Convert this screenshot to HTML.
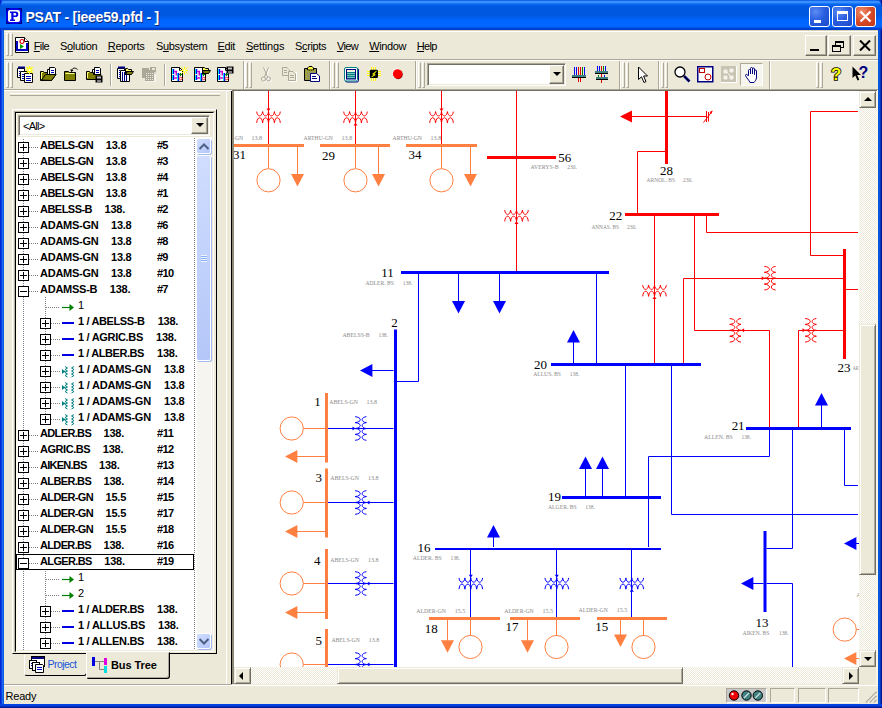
<!DOCTYPE html>
<html>
<head>
<meta charset="utf-8">
<title>PSAT - [ieee59.pfd - ]</title>
<style>
html,body{margin:0;padding:0;}
body{width:882px;height:708px;position:relative;overflow:hidden;background:#ece9d8;font-family:"Liberation Sans",sans-serif;font-size:11px;color:#000;}
.abs{position:absolute;}
#frame{position:absolute;left:0;top:0;width:882px;height:708px;background:linear-gradient(90deg,#0019cf 0,#0831d9 1px,#166aee 2.5px,#0855dd 4px,#0855dd 878px,#0855dd 880px,#001a9c 881px,#00138c 882px);}
#frameb{position:absolute;left:0;top:704px;width:882px;height:4px;background:linear-gradient(#0540e0 0,#0540e0 2px,#001ea0 3px,#00138c 4px);}
#title{position:absolute;left:0;top:0;width:882px;height:30px;border-radius:7px 7px 0 0;
 background:linear-gradient(#0050e0 0,#3a90ff 1.5px,#3a90ff 2.5px,#0a6af5 4px,#0058e0 6.5px,#0058e0 15px,#0066ff 21px,#0066ff 27px,#0040d0 28.5px,#0040d0 30px);}
#title .t{position:absolute;left:25.5px;top:9px;font-weight:bold;font-size:14px;color:#fff;text-shadow:1px 1px 0 #0a2a80;white-space:nowrap;}
#client{position:absolute;left:4px;top:30px;width:874px;height:674px;background:#ece9d8;}
.tb{position:absolute;width:21px;height:21px;border-radius:3px;border:1px solid #fff;box-sizing:border-box;}
.tbb{background:radial-gradient(circle at 30% 25%,#5c8cf5 0%,#2a5fe0 45%,#1a48c8 100%);}
.tbr{background:radial-gradient(circle at 30% 25%,#f09070 0%,#d84a28 50%,#c03818 100%);}
.menu{position:absolute;top:40px;font-size:11px;white-space:nowrap;}
.menu u{text-decoration:underline;}
.mdib{position:absolute;top:35px;height:21px;box-sizing:border-box;background:#ece9d8;border:1px solid;border-color:#fff #716f64 #716f64 #fff;box-shadow:inset -1px -1px 0 #aca899;}
.grip{position:absolute;width:3px;border:1px solid;border-color:#fff #aca899 #aca899 #fff;box-sizing:border-box;}
.hl{position:absolute;height:2px;border-top:1px solid #aca899;border-bottom:1px solid #fff;box-sizing:border-box;}
.tree{position:absolute;margin-top:-2px;font-weight:bold;font-size:11px;white-space:pre;line-height:16px;height:16px;}
.pm{position:absolute;width:11px;height:11px;border:1px solid #000;box-sizing:border-box;background:#fff;}
.pm:before{content:"";position:absolute;left:1px;top:4px;width:7px;height:1px;background:#000;}
.pm.p:after{content:"";position:absolute;left:4px;top:1px;width:1px;height:7px;background:#000;}
.dh{position:absolute;height:1px;background-image:linear-gradient(90deg,#808080 50%,transparent 50%);background-size:2px 1px;}
.dv{position:absolute;width:1px;background-image:linear-gradient(#808080 50%,transparent 50%);background-size:1px 2px;}
.sbb{width:15px;height:16px;box-sizing:border-box;border:1px solid #fff;border-radius:2.5px;background:linear-gradient(135deg,#d2defe,#c1d2fc 50%,#b4c6f8);box-shadow:1px 1px 0 #a3baf0}
.trk{background-color:#f5f4ea;background-image:linear-gradient(45deg,#fff 25%,transparent 25%,transparent 75%,#fff 75%),linear-gradient(45deg,#fff 25%,transparent 25%,transparent 75%,#fff 75%);background-size:2px 2px;background-position:0 0,1px 1px;background-color:#ece9d8}
.cb{box-sizing:border-box;background:#ece9d8;border:1px solid;border-color:#ece9d8 #716f64 #716f64 #ece9d8;box-shadow:inset 1px 1px 0 #fff,inset -1px -1px 0 #aca899}
.sp{box-sizing:border-box;border:1px solid;border-color:#aca899 #fff #fff #aca899}
</style>
</head>
<body>
<div id="frame"></div><div id="frameb"></div>
<div id="title"><div class="t" style="letter-spacing:-0.25px;">PSAT - [ieee59.pfd - ]</div></div>
<div id="client"></div>
<!-- title icon -->
<svg class="abs" style="left:6px;top:8px" width="16" height="16" viewBox="0 0 16 16"><rect x="0" y="0" width="16" height="16" fill="#0000e8"/><path d="M0 0H4V1H1V4H0ZM16 0H12V1H15V4H16ZM0 16H4V15H1V12H0ZM16 16H12V15H15V12H16Z" fill="#000080"/><rect x="2" y="2" width="12" height="12" rx="2" fill="#fff"/><path d="M4 3.500h5.500a2.800 2.800 0 0 1 0 5.600H7.500V11.500H9V13H4V11.500H5.300V5H4Z M7.500 5V7.600H9a1.300 1.300 0 0 0 0-2.600Z" fill="#0000e0"/></svg>
<!-- title buttons -->
<div class="tb tbb" style="left:809px;top:6px"><div class="abs" style="left:4px;top:13px;width:7px;height:3px;background:#fff"></div></div>
<div class="tb tbb" style="left:832px;top:6px"><div class="abs" style="left:4px;top:4px;width:11px;height:10px;border:1px solid #fff;border-top-width:3px;box-sizing:border-box"></div></div>
<div class="tb tbr" style="left:855px;top:6px"><svg class="abs" style="left:3px;top:3px" width="13" height="13" viewBox="0 0 13 13"><path d="M1.5 1.5L11.5 11.5M11.5 1.5L1.5 11.5" stroke="#fff" stroke-width="2.2"/></svg></div>
<!-- menu bar -->
<div class="abs" style="left:4px;top:30px;width:874px;height:1px;background:#d6d0b4"></div><div class="abs" style="left:4px;top:31px;width:874px;height:1px;background:#fff"></div>
<div class="grip" style="left:6px;top:33px;height:23px"></div><div class="grip" style="left:10px;top:33px;height:23px"></div>
<svg class="abs" style="left:14px;top:37px" width="16" height="16" viewBox="0 0 16 16"><path d="M1.5 0.5H10.5L14.5 4.5V15.5H1.5Z" fill="#fff" stroke="#000"/><path d="M10.5 0.5V4.5H14.5" fill="#fff" stroke="#000"/><path d="M3 4V13H13V6" fill="none" stroke="#0000c0" stroke-width="2"/><circle cx="8" cy="4.5" r="2" fill="none" stroke="#e00000" stroke-width="1.2"/><path d="M6 7V12L10 9.5Z" fill="#00a000"/></svg>
<div class="menu" style="letter-spacing:-0.61px;left:33.7px"><u>F</u>ile</div>
<div class="menu" style="letter-spacing:-0.30px;left:59.9px">S<u>o</u>lution</div>
<div class="menu" style="letter-spacing:-0.23px;left:107.7px"><u>R</u>eports</div>
<div class="menu" style="letter-spacing:-0.32px;left:155.9px">S<u>u</u>bsystem</div>
<div class="menu" style="letter-spacing:-0.42px;left:217.6px"><u>E</u>dit</div>
<div class="menu" style="letter-spacing:-0.18px;left:245.9px"><u>S</u>ettings</div>
<div class="menu" style="letter-spacing:-0.36px;left:295.0px">S<u>c</u>ripts</div>
<div class="menu" style="letter-spacing:-0.59px;left:336.9px"><u>V</u>iew</div>
<div class="menu" style="letter-spacing:-0.37px;left:369.2px"><u>W</u>indow</div>
<div class="menu" style="letter-spacing:-0.69px;left:416.8px"><u>H</u>elp</div>
<div class="mdib" style="left:805px;width:22px"><div class="abs" style="left:4px;top:13px;width:9px;height:2px;background:#000"></div></div>
<div class="mdib" style="left:828px;width:23px"><div class="abs" style="left:6px;top:5px;width:9px;height:7px;border:1px solid #000;border-top-width:2px;box-sizing:border-box;background:#ece9d8"></div><div class="abs" style="left:3px;top:9px;width:9px;height:7px;border:1px solid #000;border-top-width:2px;box-sizing:border-box;background:#ece9d8"></div></div>
<div class="mdib" style="left:853px;width:23px"><svg class="abs" style="left:5px;top:4px" width="12" height="11" viewBox="0 0 12 11"><path d="M1 0.500L11 10.500M11 0.500L1 10.500" stroke="#000" stroke-width="2.100"/></svg></div>
<div class="hl" style="left:4px;top:59px;width:874px"></div>
<!-- toolbar -->
<div class="grip" style="left:6px;top:62px;height:26px"></div><div class="grip" style="left:10px;top:62px;height:26px"></div>
<!-- icon1: new docs with spark -->
<svg class="abs" style="left:17px;top:66px" width="17" height="17" viewBox="0 0 17 17"><path d="M0.5 2.5H7.5V11.5H0.5Z" fill="#fff" stroke="#000"/><path d="M1 1.5H8" stroke="#000080" stroke-width="2"/><path d="M3.5 5.5H10.5V14.5H3.5Z" fill="#fff" stroke="#000"/><path d="M7.5 7.5H15.5V16.5H7.5Z" fill="#fff" stroke="#000"/><path d="M9 10.5H14M9 12.5H14M9 14.5H14M5 8.5H7M5 10.5H7M5 12.5H7M2 5.5H3M2 7.5H3M2 9.5H3" stroke="#0000c0"/><path d="M12.5 0V8M8.5 4H16.5M9.5 1L15.5 7M15.5 1L9.5 7" stroke="#ffff00" stroke-width="1.2"/><rect x="11.5" y="3" width="2" height="2" fill="#fff"/></svg>
<!-- icon2: open folder with docs -->
<svg class="abs" style="left:40px;top:66px" width="17" height="16" viewBox="0 0 17 16"><path d="M7.500 3.500H13.500V9.500H7.500Z" fill="#fff" stroke="#000"/><path d="M9.500 1.500H14.500L15.500 2.500V8.500H9.500Z" fill="#fff" stroke="#000"/><path d="M11 4.500H14M11 6.500H14" stroke="#0000c0"/><path d="M0.500 5.500H3.500L4.500 6.500H7.500V8.500H16L11.500 14.500H0.500Z" fill="#808000" stroke="#000"/><path d="M1.500 13V6.500H3" fill="none" stroke="#ffff80"/><path d="M1.500 14L5.500 8.500H16L11.500 14.500Z" fill="#808000" stroke="#000"/></svg>
<!-- icon3: closed folder with arrow -->
<svg class="abs" style="left:64px;top:66px" width="15" height="16" viewBox="0 0 15 16"><path d="M0.500 5.500H4.500L5.500 6.500H11.500V14.500H0.500Z" fill="#808000" stroke="#000"/><path d="M1.500 7.500H10.500" stroke="#ffff80"/><path d="M7.500 5.500C7.500 2 11 1 13.500 3.500" fill="none" stroke="#000"/><path d="M6 3.500L7.500 6L9.500 4Z" fill="#000"/></svg>
<!-- icon4: folder docs + disk -->
<svg class="abs" style="left:86px;top:66px" width="17" height="17" viewBox="0 0 17 17"><path d="M6.500 3.500H12.500V9.500H6.500Z" fill="#fff" stroke="#000"/><path d="M8.500 1.500H13.500L14.500 2.500V8.500H8.500Z" fill="#fff" stroke="#000"/><path d="M10 4.500H13M10 6.500H13" stroke="#0000c0"/><path d="M0.500 5.500H3.500L4.500 6.500H7.500V8.500H15L11.500 13.500H0.500Z" fill="#808000" stroke="#000"/><path d="M1.500 12V6.500H3" fill="none" stroke="#ffff80"/><rect x="9.500" y="9.500" width="7" height="7" fill="#000"/><rect x="11" y="10.500" width="4" height="2" fill="#c0c0c0"/><rect x="11" y="14" width="4" height="2.500" fill="#808080"/></svg>
<div class="abs" style="left:110px;top:64px;width:1px;height:22px;background:#aca899;border-right:1px solid #fff"></div>
<!-- icon5: case open -->
<svg class="abs" style="left:117px;top:66px" width="17" height="16" viewBox="0 0 17 16"><path d="M0.500 2.500H7.500V12.500H0.500Z" fill="#fff" stroke="#000"/><path d="M1 1.500H8" stroke="#000080" stroke-width="2"/><path d="M3.500 4.500H12.500V15.500H3.500Z" fill="#fff" stroke="#000"/><path d="M5 7.500H11M5 9.500H11M5 11.500H11M5 13.500H11" stroke="#000080" stroke-dasharray="1 1"/><path d="M5.500 6V15M7.500 6V15M9.500 6V15" stroke="#000080" stroke-dasharray="1 1"/><path d="M2 4.500H3M2 6.500H3M2 8.500H3M2 10.500H3" stroke="#0000c0"/><path d="M8.500 8.500V2.500H10.500L11.500 3.500H14.500V5.500H8.500Z" fill="#ffff60" stroke="#000"/><path d="M10.500 5.500H16.500L14.500 8.500H8.500Z" fill="#808000" stroke="#000"/></svg>
<!-- icon6: disabled -->
<svg class="abs" style="left:141px;top:66px" width="16" height="16" viewBox="0 0 16 16"><path d="M1 2H8V12H1Z" fill="#aca899"/><path d="M4 4H13V15H4Z" fill="#aca899"/><path d="M9 1H15V8H9Z" fill="#aca899"/><path d="M5 7.500H12M5 9.500H12M5 11.500H12M5 13.500H12" stroke="#ece9d8" stroke-dasharray="1 1"/><rect x="11" y="2" width="3" height="2" fill="#ece9d8"/><path d="M5 16H14V6" fill="none" stroke="#fff"/></svg>
<div class="abs" style="left:164px;top:64px;width:1px;height:22px;background:#aca899;border-right:1px solid #fff"></div>
<!-- icon7-9: diagram doc -->
<svg class="abs" style="left:171px;top:65px" width="17" height="18" viewBox="0 0 17 18"><g id="pfd"><path d="M0.500 2.500H8.500L11.500 5.500V16.500H0.500Z" fill="#fff" stroke="#000"/><path d="M8.500 2.500V5.500H11.500" fill="none" stroke="#000"/><rect x="1" y="4" width="1" height="11" fill="#00e0ff"/><rect x="2" y="4" width="1.200" height="11" fill="#0000ff"/><rect x="1" y="9" width="2.200" height="1" fill="#fff"/><path d="M3.200 6.500H5.300V9.700H7" fill="none" stroke="#c800c8" stroke-width="1.500"/><path d="M3.200 13H6" stroke="#c800c8" stroke-width="1.500"/><rect x="6" y="8" width="1" height="8" fill="#00e0ff"/><rect x="7" y="8" width="1.200" height="8" fill="#0000ff"/><path d="M8.200 9.500H11M9.500 8V11" stroke="#008000" stroke-width="1.200"/><path d="M9.600 11.800L11.200 13.500L9.600 15.200L8.200 13.500Z" fill="#fff" stroke="#f00000" stroke-width="0.900"/></g><path d="M13.500 1.500V9.500M9.500 5.500H17M10.500 2.500L16.500 8.500M16.500 2.500L10.500 8.500" stroke="#ffff00" stroke-width="1"/><rect x="12.500" y="4.500" width="2" height="2" fill="#fff"/></svg>
<svg class="abs" style="left:194px;top:65px" width="17" height="18" viewBox="0 0 17 18"><use href="#pfd"/><path d="M8.500 8.500V2.500H10.500L11.500 3.500H14.500V5.500H8.500Z" fill="#ffff60" stroke="#000"/><path d="M10.500 5.500H16.500L14.500 8.500H8.500Z" fill="#808000" stroke="#000"/></svg>
<svg class="abs" style="left:217px;top:65px" width="17" height="18" viewBox="0 0 17 18"><use href="#pfd"/><rect x="9.500" y="1.500" width="7" height="7" fill="#000"/><rect x="11" y="2.500" width="4" height="2" fill="#c0c0c0"/><rect x="11" y="6" width="4" height="2.500" fill="#808080"/></svg>
<div class="abs" style="left:243px;top:61px;width:1px;height:28px;background:#aca899;border-right:1px solid #fff"></div>
<!-- edit group -->
<div class="grip" style="left:245px;top:62px;height:26px"></div><div class="grip" style="left:249px;top:62px;height:26px"></div>
<svg class="abs" style="left:260px;top:67px" width="13" height="17" viewBox="0 0 13 17"><g fill="none" stroke="#fff" transform="translate(1,1)"><path d="M3.500 0.500L7.500 10M8.500 0.500L4.500 10"/><circle cx="3.500" cy="12" r="2"/><circle cx="8.500" cy="12" r="2"/></g><g fill="none" stroke="#aca899"><path d="M3.500 0.500L7.500 10M8.500 0.500L4.500 10"/><circle cx="3.500" cy="12" r="2"/><circle cx="8.500" cy="12" r="2"/></g></svg>
<svg class="abs" style="left:281.500px;top:67px" width="17" height="17" viewBox="0 0 17 17"><g fill="none" stroke="#fff" transform="translate(1,1)"><path d="M0.500 0.500H6.500V7.500H0.500ZM6.500 4.500H13.500V13.500H6.500Z"/></g><g fill="#ece9d8" stroke="#aca899"><path d="M0.500 0.500H5L7.500 3V8.500H0.500Z"/><path d="M6.500 4.500H11L13.500 7V13.500H6.500Z"/><path d="M2 3.500H5M2 5.500H5M8 8.500H12M8 10.500H12" /></g></svg>
<svg class="abs" style="left:304px;top:65px" width="17" height="18" viewBox="0 0 17 18"><path d="M0.500 3.500H12.500V15.500H0.500Z" fill="#98985a" stroke="#000"/><path d="M3.500 5V3L5 1.500H8L9.500 3V5Z" fill="#ffff40" stroke="#000"/><path d="M2 14V6H11" fill="none" stroke="#c0c000" stroke-dasharray="1 1"/><path d="M6.500 8.500H12.500L15.500 11V16.500H6.500Z" fill="#fff" stroke="#000080"/><path d="M8 11.500H12M8 13.500H13" stroke="#000080"/></svg>
<div class="abs" style="left:329px;top:61px;width:1px;height:28px;background:#aca899;border-right:1px solid #fff"></div>
<div class="grip" style="left:332px;top:62px;height:26px"></div><div class="grip" style="left:336px;top:62px;height:26px"></div>
<!-- calculator -->
<svg class="abs" style="left:344px;top:66px" width="16" height="17" viewBox="0 0 16 17"><rect x="1.500" y="2.500" width="13" height="13.500" rx="1.500" fill="#fff" stroke="#000080"/><rect x="0.500" y="1.500" width="13" height="13.500" rx="1.500" fill="#fff" stroke="#008080"/><rect x="2.500" y="3.500" width="9" height="9.500" fill="#008080" stroke="#000080"/><rect x="3" y="4" width="8" height="2" fill="#f4f0e0"/><path d="M3.500 7.500H11M3.500 9.500H11M3.500 11.500H11" stroke="#fff" stroke-width="1" stroke-dasharray="1 1"/></svg>
<!-- chip -->
<svg class="abs" style="left:366px;top:66px" width="16" height="16" viewBox="0 0 16 16"><path d="M5.500 1V15M7.500 1V15M9.500 1V15M1 5.500H15M1 7.500H15M1 9.500H15" stroke="#ffff00"/><rect x="3.800" y="3.800" width="8.200" height="8.200" rx="1.200" fill="#000"/><path d="M10.500 5L6.500 8H8.500L5.500 11L9.500 8.800H7.500Z" fill="#ffff00" stroke="#ffff00" stroke-width="0.500"/></svg>
<!-- red dot -->
<svg class="abs" style="left:392px;top:68px" width="12" height="12" viewBox="0 0 12 12"><circle cx="5" cy="5.200" r="4.700" fill="#fff"/><circle cx="6.200" cy="6.600" r="4.600" fill="#a00000"/><circle cx="5.500" cy="5.800" r="4.600" fill="#ff0000"/></svg>
<div class="abs" style="left:415px;top:61px;width:1px;height:28px;background:#aca899;border-right:1px solid #fff"></div>
<div class="grip" style="left:418px;top:62px;height:26px"></div><div class="grip" style="left:422px;top:62px;height:26px"></div>
<!-- combo -->
<div class="abs" style="left:427px;top:63px;width:139px;height:23px;box-sizing:border-box;background:#fff;border:1px solid;border-color:#aca899 #fff #fff #aca899;box-shadow:inset 1px 1px 0 #716f64,inset -1px -1px 0 #ece9d8"></div>
<div class="abs" style="left:549px;top:65px;width:15px;height:19px;box-sizing:border-box;background:#ece9d8;border:1px solid;border-color:#fff #716f64 #716f64 #fff;box-shadow:inset -1px -1px 0 #aca899"><div class="abs" style="left:3px;top:6px;width:0;height:0;border:4px solid transparent;border-top-color:#000;border-bottom:none"></div></div>
<!-- bus icons -->
<svg class="abs" style="left:571px;top:66px" width="16" height="17" viewBox="0 0 16 17"><path d="M3.500 1V9" stroke="#0000ff"/><path d="M5.500 1V9" stroke="#0000ff"/><path d="M7.500 1V16" stroke="#e00000"/><path d="M9.500 1V16" stroke="#e00000"/><path d="M11.500 1V9" stroke="#008000"/><path d="M13.500 1V9" stroke="#0000ff"/><rect x="1" y="9" width="14" height="2" fill="#408080"/><path d="M1 11.500H15" stroke="#000"/></svg>
<svg class="abs" style="left:594px;top:66px" width="16" height="17" viewBox="0 0 16 17"><path d="M3.500 0V6M5.500 0V6M11.500 0V6" stroke="#0000ff"/><path d="M7.500 0V17" stroke="#e00000"/><path d="M9.500 0V6M4.500 9V14" stroke="#008000"/><path d="M10.500 9V14" stroke="#0000ff"/><rect x="1" y="5" width="13" height="2" fill="#408080"/><path d="M1 7.500H14" stroke="#000"/><rect x="2" y="11" width="12" height="2" fill="#408080"/><path d="M2 13.500H14" stroke="#000"/></svg>
<div class="abs" style="left:619px;top:61px;width:1px;height:28px;background:#aca899;border-right:1px solid #fff"></div>
<div class="grip" style="left:622px;top:62px;height:26px"></div><div class="grip" style="left:626px;top:62px;height:26px"></div>
<!-- arrow cursor -->
<svg class="abs" style="left:637px;top:66px" width="12" height="18" viewBox="0 0 12 18"><path d="M1.500 1V13.500L4.500 10.800L7 16.500L9 15.600L6.600 10H10.500Z" fill="#fff" stroke="#000"/></svg>
<div class="abs" style="left:658px;top:61px;width:1px;height:28px;background:#aca899;border-right:1px solid #fff"></div>
<div class="grip" style="left:661px;top:62px;height:26px"></div><div class="grip" style="left:665px;top:62px;height:26px"></div>
<!-- magnifier -->
<svg class="abs" style="left:674px;top:66px" width="17" height="17" viewBox="0 0 17 17"><circle cx="6" cy="6" r="5" fill="#fff" stroke="#000" stroke-width="1.300"/><path d="M10 10L15.500 15.500" stroke="#000080" stroke-width="2.600"/><path d="M9.500 9.500L15 15" stroke="#000" stroke-width="1"/></svg>
<svg class="abs" style="left:697px;top:66px" width="17" height="17" viewBox="0 0 17 17"><rect x="0.750" y="0.750" width="15" height="15" fill="#fff" stroke="#000080" stroke-width="1.500"/><rect x="2.500" y="2.500" width="5" height="4" fill="#fff" stroke="#c00000"/><circle cx="11" cy="11" r="3" fill="#fff" stroke="#c00000"/></svg>
<svg class="abs" style="left:721px;top:66px" width="16" height="17" viewBox="0 0 16 17"><rect x="0" y="0" width="15" height="16" fill="#c8c4b4"/><path d="M3 4H6V7H3ZM9 3H12V6H9ZM3 10H6V13H3ZM9 10H12V13H9ZM6 6L9 10" fill="#f4f2ea" stroke="#f4f2ea"/><path d="M0 16.500H15.500V0" fill="none" stroke="#fff"/></svg>
<div class="abs" style="left:740px;top:63px;width:23px;height:23px;box-sizing:border-box;border:1px solid;border-color:#aca899 #fff #fff #aca899;background:#f6f5ee"></div>
<svg class="abs" style="left:744px;top:66px" width="17" height="17" viewBox="0 0 17 17"><path d="M4.500 9.500V4.500a1 1 0 0 1 2 0V8 V2.500a1 1 0 0 1 2 0V8 V3a1 1 0 0 1 2 0V8.500 V5a1 1 0 0 1 2 0V11c0 3-1.500 4-2.500 5.500H6C5 14 2.500 12 1.500 9.500c0-1.500 1.500-1.500 3 0.500Z" fill="#fff" stroke="#000080"/></svg>
<div class="abs" style="left:769px;top:61px;width:1px;height:28px;background:#aca899;border-right:1px solid #fff"></div>
<div class="grip" style="left:816px;top:62px;height:26px"></div><div class="grip" style="left:820px;top:62px;height:26px"></div>
<div class="abs" style="left:831px;top:65px;width:12px;font:bold 17px 'Liberation Sans',sans-serif;color:#ffff00;-webkit-text-stroke:1.6px #000;paint-order:stroke fill">?</div>
<svg class="abs" style="left:852px;top:66px" width="10" height="16" viewBox="0 0 10 16"><path d="M0.500 0.500V12L3.300 9.500L5.500 14.500L7.300 13.700L5.200 9H9Z" fill="#000"/></svg>
<div class="abs" style="left:858.5px;top:63.5px;width:10px;font:bold 16px 'Liberation Sans',sans-serif;color:#000080">?</div>

<div class="hl" style="left:4px;top:89px;width:874px"></div>

<!-- left panel -->
<div class="abs" style="left:10px;top:93px;width:210px;height:3px;box-sizing:border-box;border-top:1px solid #fff;border-bottom:1px solid #aca899"></div>
<div class="abs" style="left:12px;top:109px;width:205px;height:545px;box-sizing:border-box;border:1px solid;border-color:#fff #000 #000 #fff"></div>
<div class="abs" style="left:14px;top:111px;width:201px;height:541px;box-sizing:border-box;border-left:1px solid #b8b4a2;border-top:1px solid #b8b4a2"></div>
<div class="abs" style="left:15px;top:112px;width:199px;height:540px;box-sizing:border-box;border:1px solid;border-color:#000 #fff #fff #000"></div>
<div class="abs" style="left:16px;top:113px;width:197px;height:538px;box-sizing:border-box;border-left:1px solid #fffbe8;border-top:1px solid #fffbe8"></div>
<div class="abs" style="left:17px;top:137px;width:195px;height:513px;background:#fff"></div>
<!-- combo -->
<div class="abs" style="left:18px;top:115px;width:192px;height:21px;box-sizing:border-box;background:#fff;border:1px solid;border-color:#aca899 #fff #fff #aca899;box-shadow:inset 1px 1px 0 #716f64,inset -1px -1px 0 #ece9d8"></div>
<div class="abs" style="letter-spacing:-0.72px;left:23px;top:120px;font-size:11px;">&lt;All&gt;</div>
<div class="abs" style="left:191px;top:117px;width:17px;height:17px;box-sizing:border-box;background:#ece9d8;border:1px solid;border-color:#fff #716f64 #716f64 #fff;box-shadow:inset -1px -1px 0 #aca899"><div class="abs" style="left:4px;top:5px;width:0;height:0;border:4px solid transparent;border-top-color:#000;border-bottom:none"></div></div>
<!-- tree scrollbar -->
<div class="abs" style="left:197px;top:138px;width:14px;height:512px;background:#f6f5f0"></div>
<div class="dv" style="left:194px;top:138px;height:512px"></div>
<div class="abs sbb" style="left:196px;top:138px"><svg width="13" height="14" viewBox="0 0 13 14"><path d="M2.500 10L7 5.500L11.500 10" fill="none" stroke="#4d6185" stroke-width="2"/></svg></div>
<div class="abs sbb" style="left:196px;top:155px;height:206px"><div class="abs" style="left:4px;top:99px;width:6px;height:7px;background:linear-gradient(#eef4fe 0,#eef4fe 1px,#8cb0f8 1px,#8cb0f8 2px);background-size:6px 2px"></div></div>
<div class="abs sbb" style="left:196px;top:633px"><svg width="13" height="14" viewBox="0 0 13 14"><path d="M2.500 5L7 9.500L11.500 5" fill="none" stroke="#4d6185" stroke-width="2"/></svg></div>
<svg width="0" height="0" style="position:absolute"><defs><g id="tx" fill="none" stroke="#008080" stroke-width="1"><path d="M0.500 4.500V8.500M0.500 6.500H3.500"/><path d="M1.500 5.500L3 6.500L1.500 7.500Z" fill="#008080"/><path d="M3 1.500L5.500 3L3 4.500L5.500 6L3 7.500L5.500 9L3 10.500L5.500 12"/><path d="M12 1.500L9.500 3L12 4.500L9.500 6L12 7.500L9.500 9L12 10.500L9.500 12"/></g></defs></svg>
<div class="dv" style="left:23px;top:139px;height:511px"></div>
<div class="dv" style="left:45px;top:297px;height:122px"></div>
<div class="dv" style="left:45px;top:569px;height:80px"></div>
<div class="dh" style="left:29px;top:147px;width:10px"></div>
<div class="pm p" style="left:18px;top:142px"></div>
<span class="tree" style="letter-spacing:-0.52px;left:40px;top:139px">ABELS-GN</span>
<span class="tree" style="letter-spacing:-0.23px;left:105.8px;top:139px">13.8</span>
<span class="tree" style="letter-spacing:-0.92px;left:157px;top:139px">#5</span>
<div class="dh" style="left:29px;top:163px;width:10px"></div>
<div class="pm p" style="left:18px;top:158px"></div>
<span class="tree" style="letter-spacing:-0.52px;left:40px;top:155px">ABELS-GN</span>
<span class="tree" style="letter-spacing:-0.23px;left:105.8px;top:155px">13.8</span>
<span class="tree" style="letter-spacing:-0.92px;left:157px;top:155px">#3</span>
<div class="dh" style="left:29px;top:179px;width:10px"></div>
<div class="pm p" style="left:18px;top:174px"></div>
<span class="tree" style="letter-spacing:-0.52px;left:40px;top:171px">ABELS-GN</span>
<span class="tree" style="letter-spacing:-0.23px;left:105.8px;top:171px">13.8</span>
<span class="tree" style="letter-spacing:-0.92px;left:157px;top:171px">#4</span>
<div class="dh" style="left:29px;top:195px;width:10px"></div>
<div class="pm p" style="left:18px;top:190px"></div>
<span class="tree" style="letter-spacing:-0.52px;left:40px;top:187px">ABELS-GN</span>
<span class="tree" style="letter-spacing:-0.23px;left:105.8px;top:187px">13.8</span>
<span class="tree" style="letter-spacing:-0.92px;left:157px;top:187px">#1</span>
<div class="dh" style="left:29px;top:211px;width:10px"></div>
<div class="pm p" style="left:18px;top:206px"></div>
<span class="tree" style="letter-spacing:-0.53px;left:40px;top:203px">ABELSS-B</span>
<span class="tree" style="letter-spacing:-0.23px;left:104.5px;top:203px">138.</span>
<span class="tree" style="letter-spacing:-0.92px;left:157px;top:203px">#2</span>
<div class="dh" style="left:29px;top:227px;width:10px"></div>
<div class="pm p" style="left:18px;top:222px"></div>
<span class="tree" style="letter-spacing:-0.25px;left:40px;top:219px">ADAMS-GN</span>
<span class="tree" style="letter-spacing:-0.23px;left:111.0px;top:219px">13.8</span>
<span class="tree" style="letter-spacing:-0.92px;left:157px;top:219px">#6</span>
<div class="dh" style="left:29px;top:243px;width:10px"></div>
<div class="pm p" style="left:18px;top:238px"></div>
<span class="tree" style="letter-spacing:-0.25px;left:40px;top:235px">ADAMS-GN</span>
<span class="tree" style="letter-spacing:-0.23px;left:111.0px;top:235px">13.8</span>
<span class="tree" style="letter-spacing:-0.92px;left:157px;top:235px">#8</span>
<div class="dh" style="left:29px;top:259px;width:10px"></div>
<div class="pm p" style="left:18px;top:254px"></div>
<span class="tree" style="letter-spacing:-0.25px;left:40px;top:251px">ADAMS-GN</span>
<span class="tree" style="letter-spacing:-0.23px;left:111.0px;top:251px">13.8</span>
<span class="tree" style="letter-spacing:-0.92px;left:157px;top:251px">#9</span>
<div class="dh" style="left:29px;top:275px;width:10px"></div>
<div class="pm p" style="left:18px;top:270px"></div>
<span class="tree" style="letter-spacing:-0.25px;left:40px;top:267px">ADAMS-GN</span>
<span class="tree" style="letter-spacing:-0.23px;left:111.0px;top:267px">13.8</span>
<span class="tree" style="letter-spacing:-0.62px;left:157px;top:267px">#10</span>
<div class="dh" style="left:29px;top:291px;width:10px"></div>
<div class="pm" style="left:18px;top:286px"></div>
<span class="tree" style="letter-spacing:-0.25px;left:40px;top:283px">ADAMSS-B</span>
<span class="tree" style="letter-spacing:-0.23px;left:109.8px;top:283px">138.</span>
<span class="tree" style="letter-spacing:-0.92px;left:157px;top:283px">#7</span>
<div class="dh" style="left:46px;top:307px;width:14px"></div>
<svg class="abs" style="left:62px;top:303px" width="13" height="9" viewBox="0 0 13 9"><path d="M0 4.500H10" stroke="#008000" stroke-width="1.200"/><path d="M7.500 1L12 4.500L7.500 8Z" fill="#008000"/></svg>
<span class="tree" style="left:78px;top:299px;font-weight:normal">1</span>
<div class="dh" style="left:51px;top:323px;width:10px"></div>
<div class="pm p" style="left:40px;top:318px"></div>
<div class="abs" style="left:62px;top:322px;width:12px;height:2px;background:#0000e0"></div>
<span class="tree" style="letter-spacing:-0.37px;left:78px;top:315px">1 / ABELSS-B</span>
<span class="tree" style="letter-spacing:-0.23px;left:157.7px;top:315px">138.</span>
<div class="dh" style="left:51px;top:339px;width:10px"></div>
<div class="pm p" style="left:40px;top:334px"></div>
<div class="abs" style="left:62px;top:338px;width:12px;height:2px;background:#0000e0"></div>
<span class="tree" style="letter-spacing:-0.31px;left:78px;top:331px">1 / AGRIC.BS</span>
<span class="tree" style="letter-spacing:-0.23px;left:156.0px;top:331px">138.</span>
<div class="dh" style="left:51px;top:355px;width:10px"></div>
<div class="pm p" style="left:40px;top:350px"></div>
<div class="abs" style="left:62px;top:354px;width:12px;height:2px;background:#0000e0"></div>
<span class="tree" style="letter-spacing:-0.43px;left:78px;top:347px">1 / ALBER.BS</span>
<span class="tree" style="letter-spacing:-0.23px;left:157.0px;top:347px">138.</span>
<div class="dh" style="left:51px;top:371px;width:10px"></div>
<div class="pm p" style="left:40px;top:366px"></div>
<svg class="abs" style="left:62px;top:365px" width="13" height="13" viewBox="0 0 13 13"><use href="#tx"/></svg>
<span class="tree" style="letter-spacing:-0.20px;left:78px;top:363px">1 / ADAMS-GN</span>
<span class="tree" style="letter-spacing:-0.23px;left:164.0px;top:363px">13.8</span>
<div class="dh" style="left:51px;top:387px;width:10px"></div>
<div class="pm p" style="left:40px;top:382px"></div>
<svg class="abs" style="left:62px;top:381px" width="13" height="13" viewBox="0 0 13 13"><use href="#tx"/></svg>
<span class="tree" style="letter-spacing:-0.20px;left:78px;top:379px">1 / ADAMS-GN</span>
<span class="tree" style="letter-spacing:-0.23px;left:164.0px;top:379px">13.8</span>
<div class="dh" style="left:51px;top:403px;width:10px"></div>
<div class="pm p" style="left:40px;top:398px"></div>
<svg class="abs" style="left:62px;top:397px" width="13" height="13" viewBox="0 0 13 13"><use href="#tx"/></svg>
<span class="tree" style="letter-spacing:-0.20px;left:78px;top:395px">1 / ADAMS-GN</span>
<span class="tree" style="letter-spacing:-0.23px;left:164.0px;top:395px">13.8</span>
<div class="dh" style="left:51px;top:419px;width:10px"></div>
<div class="pm p" style="left:40px;top:414px"></div>
<svg class="abs" style="left:62px;top:413px" width="13" height="13" viewBox="0 0 13 13"><use href="#tx"/></svg>
<span class="tree" style="letter-spacing:-0.20px;left:78px;top:411px">1 / ADAMS-GN</span>
<span class="tree" style="letter-spacing:-0.23px;left:164.0px;top:411px">13.8</span>
<div class="dh" style="left:29px;top:435px;width:10px"></div>
<div class="pm p" style="left:18px;top:430px"></div>
<span class="tree" style="letter-spacing:-0.64px;left:40px;top:427px">ADLER.BS</span>
<span class="tree" style="letter-spacing:-0.23px;left:103.6px;top:427px">138.</span>
<span class="tree" style="letter-spacing:-0.42px;left:157px;top:427px">#11</span>
<div class="dh" style="left:29px;top:451px;width:10px"></div>
<div class="pm p" style="left:18px;top:446px"></div>
<span class="tree" style="letter-spacing:-0.44px;left:40px;top:443px">AGRIC.BS</span>
<span class="tree" style="letter-spacing:-0.23px;left:102.8px;top:443px">138.</span>
<span class="tree" style="letter-spacing:-0.62px;left:157px;top:443px">#12</span>
<div class="dh" style="left:29px;top:467px;width:10px"></div>
<div class="pm p" style="left:18px;top:462px"></div>
<span class="tree" style="letter-spacing:-0.75px;left:40px;top:459px">AIKEN.BS</span>
<span class="tree" style="letter-spacing:-0.23px;left:99.1px;top:459px">138.</span>
<span class="tree" style="letter-spacing:-0.62px;left:157px;top:459px">#13</span>
<div class="dh" style="left:29px;top:483px;width:10px"></div>
<div class="pm p" style="left:18px;top:478px"></div>
<span class="tree" style="letter-spacing:-0.64px;left:40px;top:475px">ALBER.BS</span>
<span class="tree" style="letter-spacing:-0.23px;left:103.6px;top:475px">138.</span>
<span class="tree" style="letter-spacing:-0.62px;left:157px;top:475px">#14</span>
<div class="dh" style="left:29px;top:499px;width:10px"></div>
<div class="pm p" style="left:18px;top:494px"></div>
<span class="tree" style="letter-spacing:-0.62px;left:40px;top:491px">ALDER-GN</span>
<span class="tree" style="letter-spacing:-0.23px;left:105.6px;top:491px">15.5</span>
<span class="tree" style="letter-spacing:-0.62px;left:157px;top:491px">#15</span>
<div class="dh" style="left:29px;top:515px;width:10px"></div>
<div class="pm p" style="left:18px;top:510px"></div>
<span class="tree" style="letter-spacing:-0.62px;left:40px;top:507px">ALDER-GN</span>
<span class="tree" style="letter-spacing:-0.23px;left:105.6px;top:507px">15.5</span>
<span class="tree" style="letter-spacing:-0.62px;left:157px;top:507px">#17</span>
<div class="dh" style="left:29px;top:531px;width:10px"></div>
<div class="pm p" style="left:18px;top:526px"></div>
<span class="tree" style="letter-spacing:-0.62px;left:40px;top:523px">ALDER-GN</span>
<span class="tree" style="letter-spacing:-0.23px;left:105.6px;top:523px">15.5</span>
<span class="tree" style="letter-spacing:-0.62px;left:157px;top:523px">#18</span>
<div class="dh" style="left:29px;top:547px;width:10px"></div>
<div class="pm p" style="left:18px;top:542px"></div>
<span class="tree" style="letter-spacing:-0.65px;left:40px;top:539px">ALDER.BS</span>
<span class="tree" style="letter-spacing:-0.23px;left:103.5px;top:539px">138.</span>
<span class="tree" style="letter-spacing:-0.62px;left:157px;top:539px">#16</span>
<div class="dh" style="left:29px;top:563px;width:10px"></div>
<div class="pm" style="left:18px;top:558px"></div>
<span class="tree" style="letter-spacing:-0.63px;left:40px;top:555px">ALGER.BS</span>
<span class="tree" style="letter-spacing:-0.23px;left:104.3px;top:555px">138.</span>
<span class="tree" style="letter-spacing:-0.62px;left:157px;top:555px">#19</span>
<div class="dh" style="left:46px;top:579px;width:14px"></div>
<svg class="abs" style="left:62px;top:575px" width="13" height="9" viewBox="0 0 13 9"><path d="M0 4.500H10" stroke="#008000" stroke-width="1.200"/><path d="M7.500 1L12 4.500L7.500 8Z" fill="#008000"/></svg>
<span class="tree" style="left:78px;top:571px;font-weight:normal">1</span>
<div class="dh" style="left:46px;top:595px;width:14px"></div>
<svg class="abs" style="left:62px;top:591px" width="13" height="9" viewBox="0 0 13 9"><path d="M0 4.500H10" stroke="#008000" stroke-width="1.200"/><path d="M7.500 1L12 4.500L7.500 8Z" fill="#008000"/></svg>
<span class="tree" style="left:78px;top:587px;font-weight:normal">2</span>
<div class="dh" style="left:51px;top:611px;width:10px"></div>
<div class="pm p" style="left:40px;top:606px"></div>
<div class="abs" style="left:62px;top:610px;width:12px;height:2px;background:#0000e0"></div>
<span class="tree" style="letter-spacing:-0.43px;left:78px;top:603px">1 / ALDER.BS</span>
<span class="tree" style="letter-spacing:-0.23px;left:157.0px;top:603px">138.</span>
<div class="dh" style="left:51px;top:627px;width:10px"></div>
<div class="pm p" style="left:40px;top:622px"></div>
<div class="abs" style="left:62px;top:626px;width:12px;height:2px;background:#0000e0"></div>
<span class="tree" style="letter-spacing:-0.24px;left:78px;top:619px">1 / ALLUS.BS</span>
<span class="tree" style="letter-spacing:-0.23px;left:158.0px;top:619px">138.</span>
<div class="dh" style="left:51px;top:643px;width:10px"></div>
<div class="pm p" style="left:40px;top:638px"></div>
<div class="abs" style="left:62px;top:642px;width:12px;height:2px;background:#0000e0"></div>
<span class="tree" style="letter-spacing:-0.32px;left:78px;top:635px">1 / ALLEN.BS</span>
<span class="tree" style="letter-spacing:-0.23px;left:157.0px;top:635px">138.</span>
<div class="abs" style="left:16px;top:554px;width:178px;height:16px;box-sizing:border-box;border:1px solid #000"></div>
<!-- tabs -->
<div class="abs" style="left:24px;top:654px;width:63px;height:22px;box-sizing:border-box;border:1px solid;border-color:transparent #000 #000 #fff;border-radius:0 0 3px 3px"></div>
<div class="abs" style="left:86px;top:652px;width:84px;height:27px;box-sizing:border-box;background:#ece9d8;border:1px solid;border-color:transparent #000 #000 #fff;border-radius:0 0 3px 3px;box-shadow:inset -1px -1px 0 #aca899"></div>
<svg class="abs" style="left:29px;top:656px" width="16" height="17" viewBox="0 0 16 17"><rect x="2.500" y="0.500" width="13" height="10" fill="#fff" stroke="#000"/><rect x="3" y="1" width="12" height="2" fill="#000080"/><rect x="0.500" y="4.500" width="7" height="8" fill="#fff" stroke="#000"/><rect x="3.500" y="6.500" width="7" height="8" fill="#fff" stroke="#000"/><path d="M6.500 8.500H13.500L14.500 9.500V16.500H6.500Z" fill="#fff" stroke="#000"/><path d="M8 11.500H13M8 13.500H13M2 7.500H3M2 9.500H3" stroke="#0000c0"/></svg>
<div class="abs" style="letter-spacing:-0.56px;left:47.5px;top:658px;font-size:10.5px;color:#1a55d8;">Project</div>
<svg class="abs" style="left:92px;top:657px" width="16" height="16" viewBox="0 0 16 16"><rect x="0" y="0" width="3" height="9" fill="#0000e0"/><path d="M3 4.500H7.500V12.500H12" fill="none" stroke="#808080"/><path d="M7.500 4.500H12" stroke="#808080"/><rect x="12" y="1" width="3" height="7" fill="#e000e0"/><rect x="12" y="9" width="3" height="7" fill="#00e0e0"/></svg>
<div class="abs" style="letter-spacing:-0.08px;left:111px;top:659px;font-size:11px;font-weight:bold;white-space:nowrap">Bus Tree</div>
<!-- splitter -->
<div class="abs" style="left:226px;top:90px;width:1px;height:594px;background:#fff"></div><div class="abs" style="left:4px;top:684px;width:228px;height:1px;background:#aca899"></div>

<!--DIAGRAM-START--><svg class="abs" style="left:0;top:0" width="882" height="708" viewBox="0 0 882 708">
<defs><clipPath id="dc"><rect x="234" y="91" width="625" height="576"/></clipPath>
<g id="xf" fill="none" stroke-width="1"><path d="M-11.8 -5.4C-11.2 0.3 -6.5 0.3 -5.9 -5.4C-5.3 0.3 -0.6 0.3 0 -5.4C0.6 0.3 5.3 0.3 5.9 -5.4C6.5 0.3 11.2 0.3 11.8 -5.4"/><path d="M-11.8 5.9C-11.2 -1 -6.5 -1 -5.9 5.9C-5.3 -1 -0.6 -1 0 5.9C0.6 -1 5.3 -1 5.9 5.9C6.5 -1 11.2 -1 11.8 5.9"/></g>
</defs>
<style>.bn{font:13.500px "Liberation Serif",serif;fill:#000;text-anchor:middle}.bl{font:5.800px "Liberation Serif",serif;fill:#8a8a8a}</style>
<rect x="231" y="91" width="1" height="593" fill="#000"/>
<rect x="232" y="90" width="645" height="1" fill="#716f64"/>
<rect x="232" y="91" width="2" height="593" fill="#8d8a7a"/>
<rect x="234" y="91" width="625" height="576" fill="#fff"/>
<g clip-path="url(#dc)">
<path d="M268.5 91 L268.5 144" stroke="#ff0000" stroke-width="1" fill="none"/>
<use href="#xf" x="0" y="0" transform="translate(268.5 117) rotate(0)" stroke="#ff0000"/>
<path d="M268.5 111.5 L266.5 108.5 L270.5 108.5 Z" fill="#ff0000"/>
<path d="M355.5 91 L355.5 144" stroke="#ff0000" stroke-width="1" fill="none"/>
<use href="#xf" x="0" y="0" transform="translate(355.5 117) rotate(0)" stroke="#ff0000"/>
<path d="M355.5 122.5 L353.5 125.5 L357.5 125.5 Z" fill="#ff0000"/>
<path d="M441.5 91 L441.5 144" stroke="#ff0000" stroke-width="1" fill="none"/>
<use href="#xf" x="0" y="0" transform="translate(441.5 117) rotate(0)" stroke="#ff0000"/>
<path d="M441.5 111.5 L439.5 108.5 L443.5 108.5 Z" fill="#ff0000"/>
<rect x="487" y="156" width="69" height="3" fill="#ff0000"/>
<path d="M516.5 91 L516.5 271" stroke="#ff0000" stroke-width="1" fill="none"/>
<use href="#xf" x="0" y="0" transform="translate(516.5 215.5) rotate(0)" stroke="#ff0000"/>
<path d="M516.5 221 L514.5 224 L518.5 224 Z" fill="#ff0000"/>
<rect x="665" y="91" width="3" height="73" fill="#ff0000"/>
<path d="M631 116.5 L706 116.5" stroke="#ff0000" stroke-width="1" fill="none"/>
<path d="M620 116.5 L632 110.5 L632 122.5 Z" fill="#ff0000"/>
<path d="M706.5 111 L706.5 122" stroke="#ff0000" stroke-width="1" fill="none"/>
<path d="M708.5 112 L708.5 121.5" stroke="#ff0000" stroke-width="1" fill="none"/>
<path d="M703.5 122.5 L712 111.5" stroke="#ff0000" stroke-width="1" fill="none"/>
<path d="M712.5 110.5L709.5 112L711.5 114Z" fill="#ff0000"/>
<path d="M665 151.5 L637.5 151.5 L637.5 213.5" stroke="#ff0000" stroke-width="1" fill="none"/>
<rect x="625" y="213" width="94" height="3" fill="#ff0000"/>
<path d="M654.5 216 L654.5 363" stroke="#ff0000" stroke-width="1" fill="none"/>
<use href="#xf" x="0" y="0" transform="translate(654.5 290.5) rotate(0)" stroke="#ff0000"/>
<path d="M654.5 296 L652.5 299 L656.5 299 Z" fill="#ff0000"/>
<path d="M694.5 216 L694.5 330.5 L769.5 330.5 L769.5 427" stroke="#ff0000" stroke-width="1" fill="none"/>
<use href="#xf" x="0" y="0" transform="translate(735.6 330.3) rotate(90)" stroke="#ff0000"/>
<path d="M741.1 330.3 L744.1 328.3 L744.1 332.3 Z" fill="#ff0000"/>
<path d="M706.5 216 L706.5 232.5 L858 232.5" stroke="#ff0000" stroke-width="1" fill="none"/>
<path d="M858 111.5 L810.5 111.5 L810.5 255.5 L843 255.5" stroke="#ff0000" stroke-width="1" fill="none"/>
<rect x="843" y="249" width="3" height="110" fill="#ff0000"/>
<path d="M846 289.5 L858 289.5" stroke="#ff0000" stroke-width="1" fill="none"/>
<path d="M843 278.5 L683.5 278.5 L683.5 363" stroke="#ff0000" stroke-width="1" fill="none"/>
<use href="#xf" x="0" y="0" transform="translate(770.2 278.2) rotate(90)" stroke="#ff0000"/>
<path d="M764.7 278.2 L761.7 276.2 L761.7 280.2 Z" fill="#ff0000"/>
<path d="M843 330.5 L798.5 330.5 L798.5 427" stroke="#ff0000" stroke-width="1" fill="none"/>
<use href="#xf" x="0" y="0" transform="translate(811 330.3) rotate(90)" stroke="#ff0000"/>
<path d="M805.5 330.3 L802.5 328.3 L802.5 332.3 Z" fill="#ff0000"/>
<rect x="401" y="271" width="208" height="3" fill="#0000ff"/>
<path d="M418.5 274 L418.5 381.5 L397 381.5" stroke="#0000ff" stroke-width="1" fill="none"/>
<path d="M458.5 274 L458.5 302" stroke="#0000ff" stroke-width="1" fill="none"/>
<path d="M458.5 313.5 L452 301.1 L465 301.1 Z" fill="#0000ff"/>
<path d="M499.5 274 L499.5 302" stroke="#0000ff" stroke-width="1" fill="none"/>
<path d="M499.5 313.5 L493 301.1 L506 301.1 Z" fill="#0000ff"/>
<path d="M596.5 274 L596.5 363" stroke="#0000ff" stroke-width="1" fill="none"/>
<rect x="394" y="329.5" width="3" height="338.5" fill="#0000ff"/>
<path d="M372 370.5 L393.5 370.5" stroke="#0000ff" stroke-width="1" fill="none"/>
<path d="M360 370.5 L372.4 364 L372.4 377 Z" fill="#0000ff"/>
<path d="M328 428.5 L393.5 428.5" stroke="#0000ff" stroke-width="1" fill="none"/>
<use href="#xf" x="0" y="0" transform="translate(361 428.5) rotate(90)" stroke="#0000ff"/>
<path d="M355.5 428.5 L352.5 426.5 L352.5 430.5 Z" fill="#0000ff"/>
<path d="M328 502.5 L393.5 502.5" stroke="#0000ff" stroke-width="1" fill="none"/>
<use href="#xf" x="0" y="0" transform="translate(361 502.5) rotate(90)" stroke="#0000ff"/>
<path d="M366.5 502.5 L369.5 500.5 L369.5 504.5 Z" fill="#0000ff"/>
<path d="M328 583.5 L393.5 583.5" stroke="#0000ff" stroke-width="1" fill="none"/>
<use href="#xf" x="0" y="0" transform="translate(361 583.5) rotate(90)" stroke="#0000ff"/>
<path d="M366.5 583.5 L369.5 581.5 L369.5 585.5 Z" fill="#0000ff"/>
<path d="M328 664.5 L393.5 664.5" stroke="#0000ff" stroke-width="1" fill="none"/>
<use href="#xf" x="0" y="0" transform="translate(361 664.5) rotate(90)" stroke="#0000ff"/>
<path d="M366.5 664.5 L369.5 662.5 L369.5 666.5 Z" fill="#0000ff"/>
<rect x="551" y="363" width="150" height="3" fill="#0000ff"/>
<path d="M573.5 342 L573.5 363" stroke="#0000ff" stroke-width="1" fill="none"/>
<path d="M573.5 330 L567 342.4 L580 342.4 Z" fill="#0000ff"/>
<path d="M625.5 366 L625.5 496" stroke="#0000ff" stroke-width="1" fill="none"/>
<path d="M671.5 366 L671.5 514.5 L858 514.5" stroke="#0000ff" stroke-width="1" fill="none"/>
<rect x="746" y="427" width="105" height="3" fill="#0000ff"/>
<path d="M769.5 430 L769.5 456.5 L648.5 456.5 L648.5 547" stroke="#0000ff" stroke-width="1" fill="none"/>
<path d="M821.5 405 L821.5 427" stroke="#0000ff" stroke-width="1" fill="none"/>
<path d="M821.5 393 L815 405.4 L828 405.4 Z" fill="#0000ff"/>
<path d="M844.5 430 L844.5 485.5 L858 485.5" stroke="#0000ff" stroke-width="1" fill="none"/>
<path d="M792.5 430 L792.5 548.5 L766.5 548.5" stroke="#0000ff" stroke-width="1" fill="none"/>
<rect x="763.5" y="531" width="3" height="81" fill="#0000ff"/>
<path d="M752 583.5 L763.5 583.5" stroke="#0000ff" stroke-width="1" fill="none"/>
<path d="M741 583.5 L753.4 577 L753.4 590 Z" fill="#0000ff"/>
<path d="M766.5 583.5 L792.5 583.5 L792.5 668" stroke="#0000ff" stroke-width="1" fill="none"/>
<rect x="562" y="496" width="99" height="3" fill="#0000ff"/>
<path d="M585.5 468 L585.5 496" stroke="#0000ff" stroke-width="1" fill="none"/>
<path d="M585.5 456.5 L579 468.9 L592 468.9 Z" fill="#0000ff"/>
<path d="M602.5 468 L602.5 496" stroke="#0000ff" stroke-width="1" fill="none"/>
<path d="M602.5 456.5 L596 468.9 L609 468.9 Z" fill="#0000ff"/>
<rect x="435" y="548" width="226" height="2" fill="#0000ff"/>
<path d="M493.5 537 L493.5 547" stroke="#0000ff" stroke-width="1" fill="none"/>
<path d="M493.5 525 L487 537.4 L500 537.4 Z" fill="#0000ff"/>
<path d="M470.5 550 L470.5 617" stroke="#0000ff" stroke-width="1" fill="none"/>
<use href="#xf" x="0" y="0" transform="translate(470.8 583.3) rotate(0)" stroke="#0000ff"/>
<path d="M470.8 577.8 L468.8 574.8 L472.8 574.8 Z" fill="#0000ff"/>
<path d="M556.5 550 L556.5 617" stroke="#0000ff" stroke-width="1" fill="none"/>
<use href="#xf" x="0" y="0" transform="translate(556.8 583.3) rotate(0)" stroke="#0000ff"/>
<path d="M556.8 577.8 L554.8 574.8 L558.8 574.8 Z" fill="#0000ff"/>
<path d="M631.5 550 L631.5 617" stroke="#0000ff" stroke-width="1" fill="none"/>
<use href="#xf" x="0" y="0" transform="translate(631.8 583.3) rotate(0)" stroke="#0000ff"/>
<path d="M631.8 588.8 L629.8 591.8 L633.8 591.8 Z" fill="#0000ff"/>
<path d="M844 543.5 L856.4 537 L856.4 550 Z" fill="#0000ff"/>
<path d="M856 543.5 L859 543.5" stroke="#0000ff" stroke-width="1" fill="none"/>
<rect x="234" y="144" width="70" height="3" fill="#ff8040"/>
<path d="M268.5 147 L268.5 168.5" stroke="#ff8040" stroke-width="1" fill="none"/>
<circle cx="268.5" cy="180.3" r="11.6" stroke="#ff8040" fill="none"/>
<path d="M297.5 147 L297.5 175" stroke="#ff8040" stroke-width="1" fill="none"/>
<path d="M297.5 186.5 L291 174.1 L304 174.1 Z" fill="#ff8040"/>
<rect x="320" y="144" width="70" height="3" fill="#ff8040"/>
<path d="M355.5 147 L355.5 168.5" stroke="#ff8040" stroke-width="1" fill="none"/>
<circle cx="355.5" cy="180.3" r="11.6" stroke="#ff8040" fill="none"/>
<path d="M378.5 147 L378.5 175" stroke="#ff8040" stroke-width="1" fill="none"/>
<path d="M378.5 186.5 L372 174.1 L385 174.1 Z" fill="#ff8040"/>
<rect x="406" y="144" width="71" height="3" fill="#ff8040"/>
<path d="M441.5 147 L441.5 168.5" stroke="#ff8040" stroke-width="1" fill="none"/>
<circle cx="441.5" cy="180.3" r="11.6" stroke="#ff8040" fill="none"/>
<path d="M470.5 147 L470.5 175" stroke="#ff8040" stroke-width="1" fill="none"/>
<path d="M470.5 186.5 L464 174.1 L477 174.1 Z" fill="#ff8040"/>
<rect x="325" y="393" width="3" height="69.5" fill="#ff8040"/>
<circle cx="291.7" cy="428.5" r="11.6" stroke="#ff8040" fill="none"/>
<path d="M303.3 428.5 L325 428.5" stroke="#ff8040" stroke-width="1" fill="none"/>
<path d="M297 456.5 L325 456.5" stroke="#ff8040" stroke-width="1" fill="none"/>
<path d="M285 456.5 L297.4 450 L297.4 463 Z" fill="#ff8040"/>
<rect x="325" y="468.5" width="3" height="69" fill="#ff8040"/>
<circle cx="291.7" cy="502.5" r="11.6" stroke="#ff8040" fill="none"/>
<path d="M303.3 502.5 L325 502.5" stroke="#ff8040" stroke-width="1" fill="none"/>
<path d="M297 531.5 L325 531.5" stroke="#ff8040" stroke-width="1" fill="none"/>
<path d="M285 531.5 L297.4 525 L297.4 538 Z" fill="#ff8040"/>
<rect x="325" y="549" width="3" height="70" fill="#ff8040"/>
<circle cx="291.7" cy="583.5" r="11.6" stroke="#ff8040" fill="none"/>
<path d="M303.3 583.5 L325 583.5" stroke="#ff8040" stroke-width="1" fill="none"/>
<path d="M297 612.5 L325 612.5" stroke="#ff8040" stroke-width="1" fill="none"/>
<path d="M285 612.5 L297.4 606 L297.4 619 Z" fill="#ff8040"/>
<rect x="325" y="629" width="3" height="39" fill="#ff8040"/>
<circle cx="291.7" cy="664.5" r="11.6" stroke="#ff8040" fill="none"/>
<path d="M303.3 664.5 L325 664.5" stroke="#ff8040" stroke-width="1" fill="none"/>
<rect x="429" y="617" width="71" height="3" fill="#ff8040"/>
<path d="M447.5 620 L447.5 641.7" stroke="#ff8040" stroke-width="1" fill="none"/>
<path d="M447.5 652.7 L441 640.3 L454 640.3 Z" fill="#ff8040"/>
<path d="M470.5 620 L470.5 635.5" stroke="#ff8040" stroke-width="1" fill="none"/>
<circle cx="470.5" cy="647" r="11.6" stroke="#ff8040" fill="none"/>
<rect x="510" y="617" width="70" height="3" fill="#ff8040"/>
<path d="M527.5 620 L527.5 641.7" stroke="#ff8040" stroke-width="1" fill="none"/>
<path d="M527.5 652.7 L521 640.3 L534 640.3 Z" fill="#ff8040"/>
<path d="M556.5 620 L556.5 635.5" stroke="#ff8040" stroke-width="1" fill="none"/>
<circle cx="556.5" cy="647" r="11.6" stroke="#ff8040" fill="none"/>
<rect x="597" y="617" width="70" height="3" fill="#ff8040"/>
<path d="M620.5 620 L620.5 635.9" stroke="#ff8040" stroke-width="1" fill="none"/>
<path d="M620.5 646.9 L614 634.5 L627 634.5 Z" fill="#ff8040"/>
<path d="M643.5 620 L643.5 635.5" stroke="#ff8040" stroke-width="1" fill="none"/>
<circle cx="643.5" cy="647" r="11.6" stroke="#ff8040" fill="none"/>
<circle cx="844.7" cy="629.6" r="11.6" stroke="#ff8040" fill="none"/>
<path d="M856.3 629.5 L859 629.5" stroke="#ff8040" stroke-width="1" fill="none"/>
<path d="M844 658.5 L856.4 652 L856.4 665 Z" fill="#ff8040"/>
<path d="M856 658.5 L859 658.5" stroke="#ff8040" stroke-width="1" fill="none"/>
<text transform="translate(239.5 159) scale(.96 1)" class="bn">31</text>
<text transform="translate(328.55 160) scale(.96 1)" class="bn">29</text>
<text transform="translate(414.9 159) scale(.96 1)" class="bn">34</text>
<text transform="translate(564.7 162) scale(.96 1)" class="bn">56</text>
<text transform="translate(666.4 175) scale(.96 1)" class="bn">28</text>
<text transform="translate(615.65 220) scale(.96 1)" class="bn">22</text>
<text transform="translate(387.4 277) scale(.96 1)" class="bn">11</text>
<text transform="translate(394.55 327) scale(.96 1)" class="bn">2</text>
<text transform="translate(843.9 372.3) scale(.96 1)" class="bn">23</text>
<text transform="translate(540.4 369) scale(.96 1)" class="bn">20</text>
<text transform="translate(738.1 430) scale(.96 1)" class="bn">21</text>
<text transform="translate(554.45 501) scale(.96 1)" class="bn">19</text>
<text transform="translate(423.95 551.5) scale(.96 1)" class="bn">16</text>
<text transform="translate(762 626.5) scale(.96 1)" class="bn">13</text>
<text transform="translate(317.5 406) scale(.96 1)" class="bn">1</text>
<text transform="translate(318.85 482) scale(.96 1)" class="bn">3</text>
<text transform="translate(317.15 565) scale(.96 1)" class="bn">4</text>
<text transform="translate(318.75 645) scale(.96 1)" class="bn">5</text>
<text transform="translate(431.15 633) scale(.96 1)" class="bn">18</text>
<text transform="translate(512 631) scale(.96 1)" class="bn">17</text>
<text transform="translate(601.7 631) scale(.96 1)" class="bn">15</text>
<text x="233" y="140" class="bl" textLength="10.3" lengthAdjust="spacingAndGlyphs">-GN</text>
<text x="251.4" y="140" class="bl" textLength="10.6" lengthAdjust="spacingAndGlyphs">13.8</text>
<text x="303.5" y="140" class="bl" textLength="29.5" lengthAdjust="spacingAndGlyphs">ARTHU-GN</text>
<text x="341.6" y="140" class="bl" textLength="10.6" lengthAdjust="spacingAndGlyphs">13.8</text>
<text x="392.5" y="140" class="bl" textLength="29.5" lengthAdjust="spacingAndGlyphs">ARTHU-GN</text>
<text x="430.6" y="140" class="bl" textLength="10.6" lengthAdjust="spacingAndGlyphs">13.8</text>
<text x="530.5" y="169" class="bl" textLength="28.1" lengthAdjust="spacingAndGlyphs">AVERYS-B</text>
<text x="567.3" y="169" class="bl" textLength="9.6" lengthAdjust="spacingAndGlyphs">230.</text>
<text x="646.5" y="182" class="bl" textLength="28.5" lengthAdjust="spacingAndGlyphs">ARNOL. BS</text>
<text x="683" y="182" class="bl" textLength="9.6" lengthAdjust="spacingAndGlyphs">230.</text>
<text x="591.4" y="229" class="bl" textLength="27.5" lengthAdjust="spacingAndGlyphs">ANNAS. BS</text>
<text x="627.1" y="229" class="bl" textLength="9.6" lengthAdjust="spacingAndGlyphs">230.</text>
<text x="365.4" y="285" class="bl" textLength="28.6" lengthAdjust="spacingAndGlyphs">ADLER. BS</text>
<text x="402.7" y="285" class="bl" textLength="9.6" lengthAdjust="spacingAndGlyphs">138.</text>
<text x="342.4" y="337" class="bl" textLength="27.3" lengthAdjust="spacingAndGlyphs">ABELSS-B</text>
<text x="378.4" y="337" class="bl" textLength="9.6" lengthAdjust="spacingAndGlyphs">138.</text>
<text x="533.2" y="376" class="bl" textLength="27.8" lengthAdjust="spacingAndGlyphs">ALLUS. BS</text>
<text x="569.7" y="376" class="bl" textLength="9.6" lengthAdjust="spacingAndGlyphs">138.</text>
<text x="704" y="439" class="bl" textLength="28.7" lengthAdjust="spacingAndGlyphs">ALLEN. BS</text>
<text x="741.4" y="439" class="bl" textLength="9.6" lengthAdjust="spacingAndGlyphs">138.</text>
<text x="548" y="509" class="bl" textLength="28.7" lengthAdjust="spacingAndGlyphs">ALGER. BS</text>
<text x="585.3" y="509" class="bl" textLength="9.6" lengthAdjust="spacingAndGlyphs">138.</text>
<text x="412.8" y="560" class="bl" textLength="29" lengthAdjust="spacingAndGlyphs">ALDER. BS</text>
<text x="450.4" y="560" class="bl" textLength="9.6" lengthAdjust="spacingAndGlyphs">138.</text>
<text x="742.4" y="635" class="bl" textLength="27" lengthAdjust="spacingAndGlyphs">AIKEN. BS</text>
<text x="778.9" y="635" class="bl" textLength="9.6" lengthAdjust="spacingAndGlyphs">138.</text>
<text x="329.2" y="404" class="bl" textLength="28.8" lengthAdjust="spacingAndGlyphs">ABELS-GN</text>
<text x="366.4" y="404" class="bl" textLength="10.6" lengthAdjust="spacingAndGlyphs">13.8</text>
<text x="330.3" y="480" class="bl" textLength="28.7" lengthAdjust="spacingAndGlyphs">ABELS-GN</text>
<text x="367.9" y="480" class="bl" textLength="10.6" lengthAdjust="spacingAndGlyphs">13.8</text>
<text x="330.3" y="562" class="bl" textLength="28.7" lengthAdjust="spacingAndGlyphs">ABELS-GN</text>
<text x="367.9" y="562" class="bl" textLength="10.6" lengthAdjust="spacingAndGlyphs">13.8</text>
<text x="331.4" y="642" class="bl" textLength="28.4" lengthAdjust="spacingAndGlyphs">ABELS-GN</text>
<text x="368.8" y="642" class="bl" textLength="10.6" lengthAdjust="spacingAndGlyphs">13.8</text>
<text x="416.2" y="613" class="bl" textLength="29.7" lengthAdjust="spacingAndGlyphs">ALDER-GN</text>
<text x="454.8" y="613" class="bl" textLength="10.6" lengthAdjust="spacingAndGlyphs">15.5</text>
<text x="504.3" y="613" class="bl" textLength="29.4" lengthAdjust="spacingAndGlyphs">ALDER-GN</text>
<text x="542.4" y="613" class="bl" textLength="10.6" lengthAdjust="spacingAndGlyphs">15.5</text>
<text x="578.6" y="612" class="bl" textLength="29.2" lengthAdjust="spacingAndGlyphs">ALDER-GN</text>
<text x="616.7" y="612" class="bl" textLength="10.6" lengthAdjust="spacingAndGlyphs">15.5</text>
<text x="852.7" y="370" class="bl" textLength="6" lengthAdjust="spacingAndGlyphs">AR</text>
<text x="856.5" y="597" class="bl" textLength="4" lengthAdjust="spacingAndGlyphs">A</text>
</g>
</svg><!--DIAGRAM-END-->
<!-- scrollbars -->
<div class="abs" style="left:876px;top:91px;width:2px;height:593px;background:#f8f5e8"></div>
<div class="abs trk" style="left:859px;top:91px;width:17px;height:576px"></div>
<div class="abs trk" style="left:234px;top:667px;width:625px;height:17px"></div>
<div class="abs" style="left:859px;top:667px;width:17px;height:17px;background:#ece9d8"></div>
<div class="abs cb" style="left:859px;top:91px;width:17px;height:17px"><div class="abs" style="left:4px;top:5px;border:4px solid transparent;border-bottom-color:#000;border-top:none;width:0;height:0"></div></div>
<div class="abs cb" style="left:859px;top:324px;width:17px;height:251px"></div>
<div class="abs cb" style="left:859px;top:650px;width:17px;height:17px"><div class="abs" style="left:4px;top:6px;border:4px solid transparent;border-top-color:#000;border-bottom:none;width:0;height:0"></div></div>
<div class="abs cb" style="left:234px;top:667px;width:17px;height:17px"><div class="abs" style="left:4px;top:4px;border:4px solid transparent;border-right-color:#000;border-left:none;width:0;height:0"></div></div>
<div class="abs cb" style="left:337px;top:667px;width:346px;height:17px"></div>
<div class="abs cb" style="left:842px;top:667px;width:17px;height:17px"><div class="abs" style="left:6px;top:4px;border:4px solid transparent;border-left-color:#000;border-right:none;width:0;height:0"></div></div>
<!-- status bar -->
<div class="abs" style="left:4px;top:685px;width:874px;height:1px;background:#fff"></div>
<div class="abs" style="letter-spacing:-0.20px;left:5.5px;top:690px;font-size:11px;">Ready</div>
<div class="abs sp" style="left:726px;top:688px;width:41px;height:15px;background:#c8c8c8"></div>
<svg class="abs" style="left:727px;top:689px" width="39" height="13" viewBox="0 0 39 13"><circle cx="7" cy="6.500" r="4.700" fill="#f00000" stroke="#000"/><circle cx="5.500" cy="5" r="1.200" fill="#fff"/><circle cx="19.500" cy="6.500" r="4.700" fill="#408080" stroke="#000"/><path d="M17 9L22 4" stroke="#c0d8d8" stroke-width="1.500"/><circle cx="30.800" cy="6.500" r="4.700" fill="#408080" stroke="#000"/><path d="M28.300 9L33.300 4" stroke="#c0d8d8" stroke-width="1.500"/></svg>
<div class="abs sp" style="left:770px;top:688px;width:25px;height:15px"></div>
<div class="abs sp" style="left:798px;top:688px;width:28px;height:15px"></div>
<div class="abs sp" style="left:828px;top:688px;width:31px;height:15px"></div>
<svg class="abs" style="left:865px;top:691px" width="12" height="12" viewBox="0 0 12 12"><path d="M11.500 1L1 11.500M11.500 5L5 11.500M11.500 9L9 11.500" stroke="#aca899" stroke-width="1.600"/><path d="M11.500 2L2 11.500M11.500 6L6 11.500M11.500 10L10 11.500" stroke="#fff" stroke-width="0.800"/></svg>

</body>
</html>
